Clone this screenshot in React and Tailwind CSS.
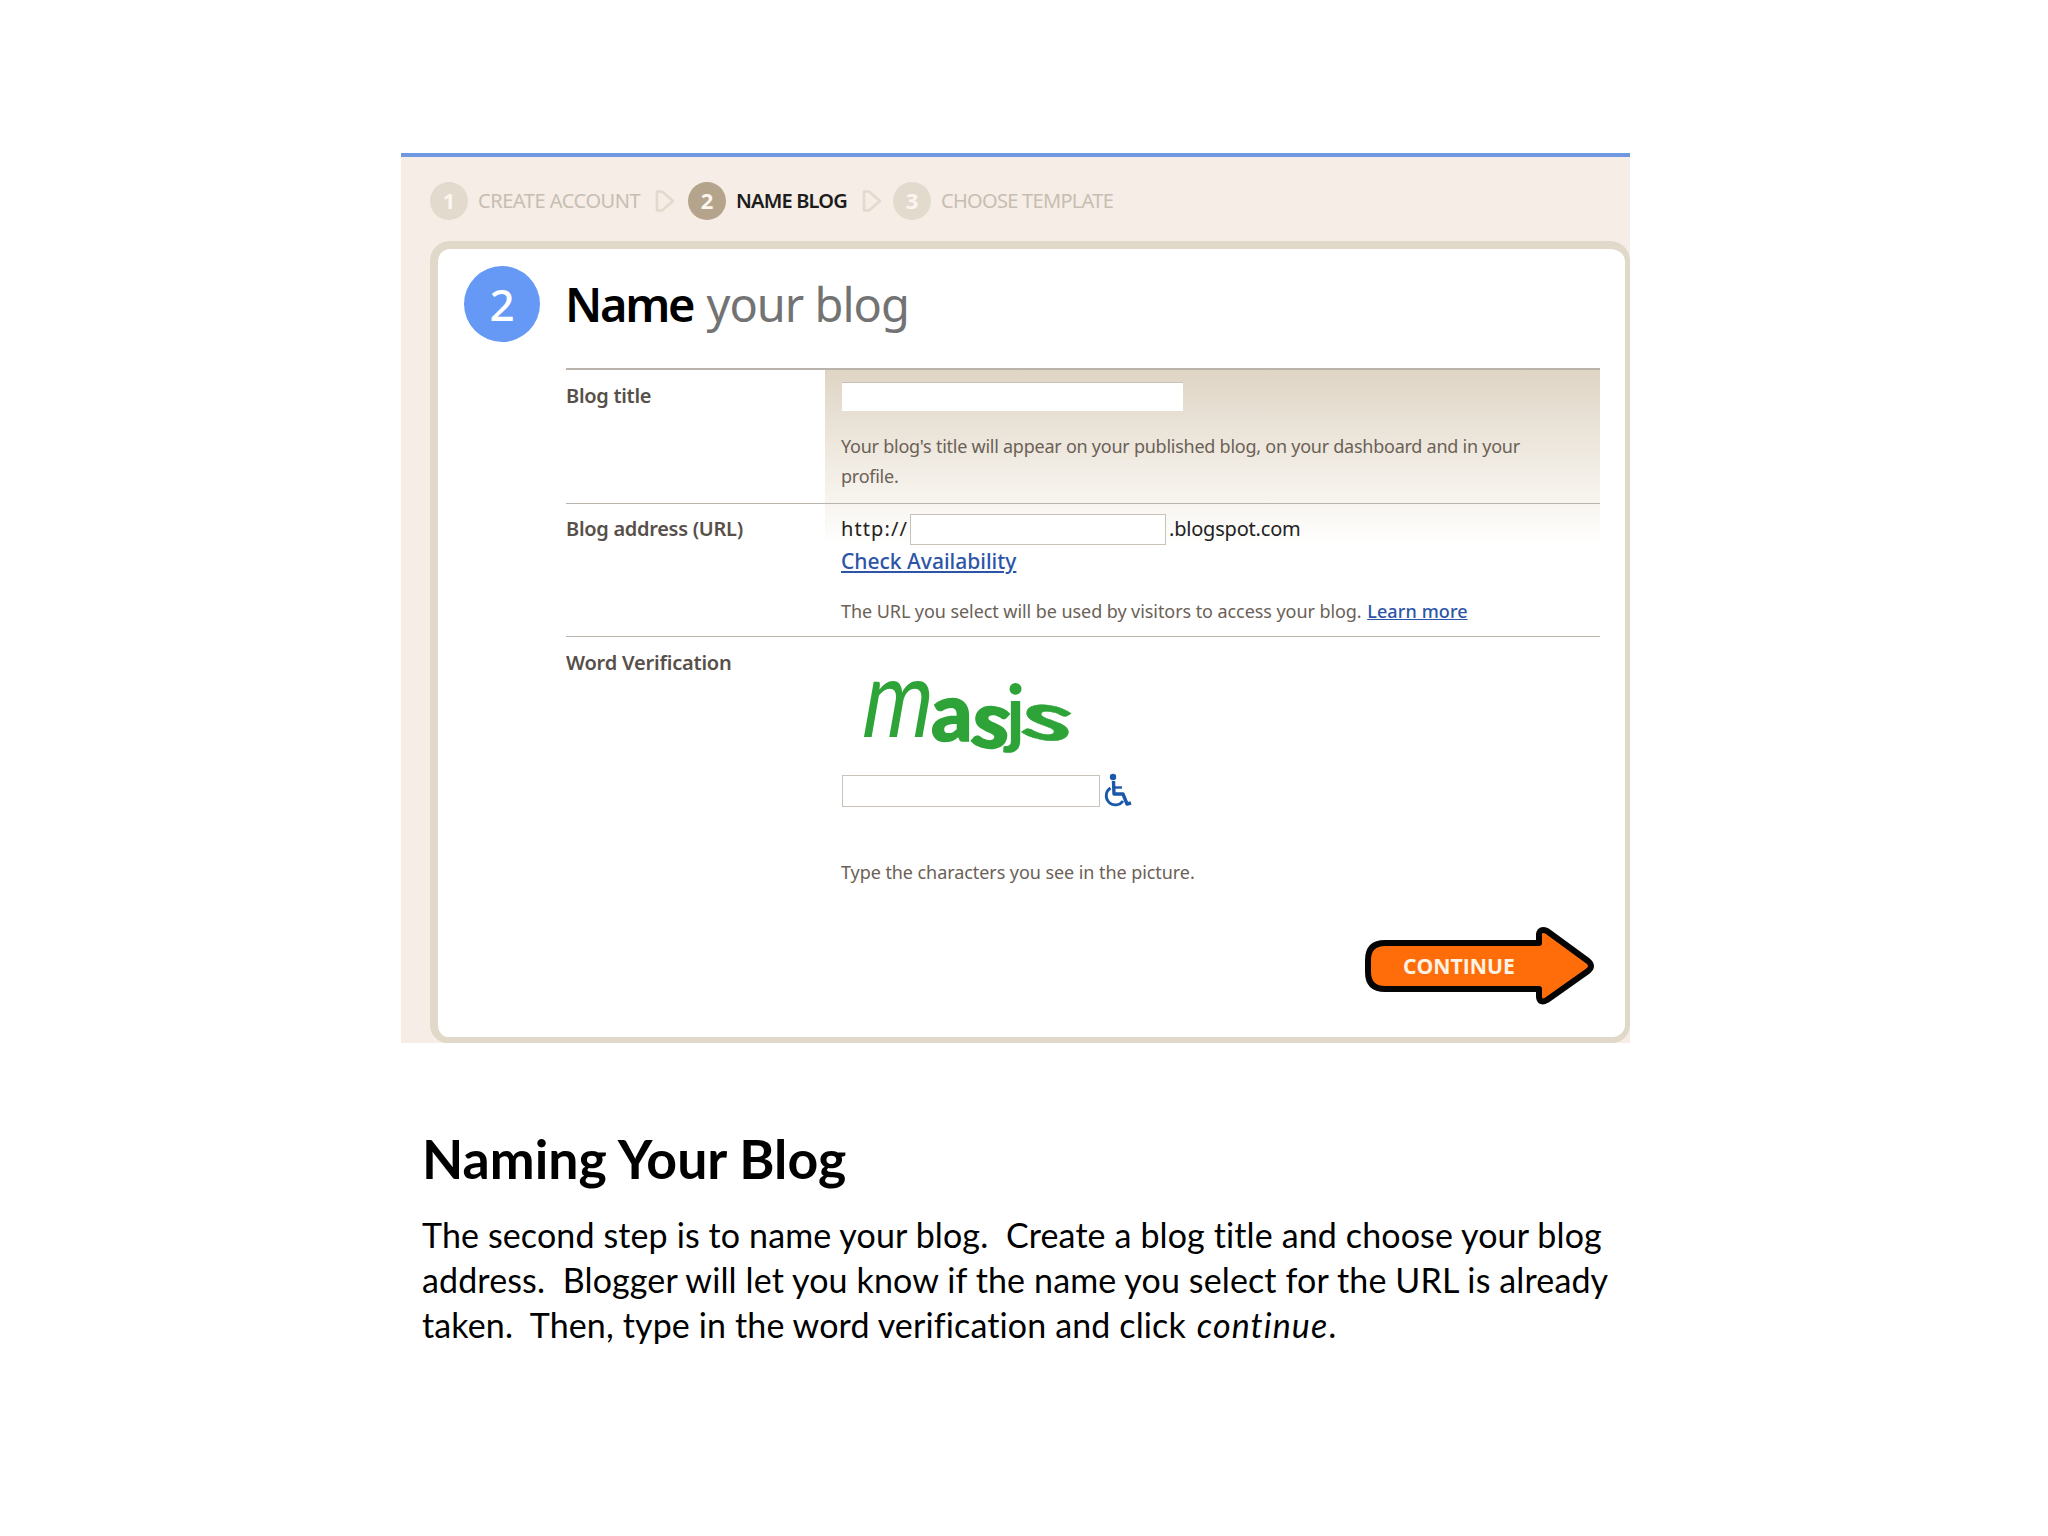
import React from "react";

const ui = { fontFamily: '"Noto Sans", sans-serif' };

function StepDot({ n, active }) {
  return (
    <div className={`flex h-[38px] w-[38px] shrink-0 items-center justify-center rounded-full pb-[2px] text-[22px] font-bold ${active ? "bg-[#b4a48c] text-[#fbf6ee]" : "bg-[#e3dace] text-[#fbf6ee]"}`}>
      {n}
    </div>
  );
}

function Tri() {
  return (
    <svg width="22" height="24" viewBox="0 0 22 24" className="shrink-0">
      <path d="M3 2.5 L3 21.5 L8 21.5 L19 12 L8 2.5 Z" fill="none" stroke="#e3dace" strokeWidth="2.5" strokeLinejoin="round" />
    </svg>
  );
}

function Captcha() {
  return (
    <svg width="240" height="90" viewBox="0 0 240 90" className="block overflow-visible">
      <g fill="#2ea338" stroke="#2ea338" style={{ fontFamily: '"Lato", sans-serif' }}>
        <text x="0" y="0" fontSize="109" strokeWidth="0" transform="translate(17 68) skewX(-10) scale(0.78 1)">m</text>
        <text x="0" y="0" fontSize="81" fontWeight="900" strokeWidth="1.5" transform="translate(90 72)">a</text>
        <text x="0" y="0" fontSize="79" fontWeight="900" strokeWidth="1.5" transform="translate(128 76) rotate(8) scale(1.1 1)">s</text>
        <text x="0" y="0" fontSize="75" fontWeight="700" strokeWidth="0" transform="translate(165 70)">j</text>
        <text x="0" y="0" fontSize="70" fontWeight="700" strokeWidth="0.5" transform="translate(177 66) rotate(10) scale(1.72 0.95)">s</text>
      </g>
    </svg>
  );
}

function Wheelchair() {
  return (
    <svg width="28" height="36" viewBox="0 0 28 36" className="block shrink-0">
      <circle cx="9" cy="4" r="3.2" fill="#1c58a8" />
      <path d="M9.5 8 L10 21 L19 21 L23 31 L27 30" fill="none" stroke="#1c58a8" strokeWidth="3.4" strokeLinejoin="round" />
      <path d="M10 14.5 L18 14.5" fill="none" stroke="#1c58a8" strokeWidth="2.4" />
      <path d="M6.5 15 A9.2 9.2 0 1 0 19 28" fill="none" stroke="#1c58a8" strokeWidth="2.8" />
    </svg>
  );
}

function ContinueArrow() {
  return (
    <div className="relative h-[80px] w-[232px]">
      <svg width="232" height="80" viewBox="0 0 232 80" className="block">
        <path d="M22 17 L176 17 L176 8 Q177 2 184 5 L225 35 Q231 40 225 45 L184 74 Q177 78 176 71 L176 63 L22 63 Q5 63 5 46 L5 34 Q5 17 22 17 Z" fill="#ff6d0a" stroke="#050505" strokeWidth="6" strokeLinejoin="round" />
      </svg>
      <span className="absolute left-[40px] top-[26px] text-[21.2px] leading-[28px] font-bold text-[#fdf3e4]" style={{ fontFamily: '"Open Sans", sans-serif' }}>CONTINUE</span>
    </div>
  );
}

function Field({ className }) {
  return <div className={`border border-[#c9c2b8] bg-white ${className}`} />;
}

export default function App() {
  return (
    <div className="h-[1536px] w-[2048px] bg-white pl-[401px] pt-[153px]">
      <div className="flex h-[890px] w-[1229px] flex-col border-t-[4px] border-[#6f98e0] bg-[#f5ede6]" style={ui}>
        <div className="flex h-[84px] items-center pl-[29px] pt-[4px] text-[20px] whitespace-nowrap text-[#c7beb2]">
          <StepDot n="1" />
          <span className="ml-[10px] w-[162px] tracking-[-0.45px]">CREATE ACCOUNT</span>
          <span className="ml-[14px]"><Tri /></span>
          <span className="ml-[12px]"><StepDot n="2" active /></span>
          <span className="ml-[10px] w-[113px] font-semibold tracking-[-0.8px] text-[#1c1c1c]">NAME BLOG</span>
          <span className="ml-[12px]"><Tri /></span>
          <span className="ml-[10px]"><StepDot n="3" /></span>
          <span className="ml-[10px] tracking-[-0.7px]">CHOOSE TEMPLATE</span>
        </div>

        <div className="ml-[29px] flex-1 rounded-tl-[20px] rounded-tr-[20px] rounded-bl-[18px] rounded-br-[18px] border-t-[8px] border-r-[5px] border-b-[6px] border-l-[8px] border-[#e0d8c8] bg-white">
          <div className="flex h-[119px] items-center pb-[10px] pl-[26px]">
            <div className="flex h-[76px] w-[76px] items-center justify-center rounded-full bg-[#6699f5] text-[44px] leading-none font-medium text-white">2</div>
            <div className="ml-[25px] mt-[2px] text-[47px] leading-none tracking-[-1px] text-[#737373]">
              <span className="font-semibold tracking-[-2.3px] text-black">Name</span> <span className="ml-[2px]">your blog</span>
            </div>
          </div>

          <div className="ml-[128px] w-[1034px] text-[18px] text-[#6b6156]">
            <div className="flex h-[135px] border-t-2 border-[#b9b3ab]">
              <div className="w-[259px] pt-[12px] text-[20px] leading-[28px] font-semibold tracking-[-0.3px] text-[#57504a]">Blog title</div>
              <div className="flex-1 bg-gradient-to-b from-[#dfd5c5] to-[#f8f5f0] pl-[16px] pr-[40px] pt-[12px]">
                <Field className="ml-[1px] h-[29px] w-[341px] border-x-0 border-b-0 border-t-[#c9c2b8]" />
                <p className="mt-[20px] text-[18px] leading-[30px] tracking-[-0.25px]">Your blog's title will appear on your published blog, on your dashboard and in your profile.</p>
              </div>
            </div>

            <div className="flex h-[133px] border-t border-[#b9b3ab]">
              <div className="w-[259px] pt-[11px] text-[20px] leading-[28px] font-semibold tracking-[-0.3px] text-[#57504a]">Blog address (URL)</div>
              <div className="flex-1 bg-[linear-gradient(#f8f5f0,#ffffff)] bg-[length:100%_42px] bg-no-repeat pl-[16px] pt-[10px]">
                <div className="flex h-[31px] items-center text-[20px] text-[#222222]">
                  <span className="mb-[2px] w-[69px] tracking-[1.1px]">http://</span>
                  <Field className="h-[31px] w-[256px] border-[#c4bdb4]" />
                  <span className="mb-[2px] ml-[3px] tracking-[-0.2px]">.blogspot.com</span>
                </div>
                <div className="mt-[1px] text-[21px] leading-[30px] font-medium text-[#2c55a8] underline">Check Availability</div>
                <p className="mt-[20px] text-[18px] leading-[30px] tracking-[-0.07px]">The URL you select will be used by visitors to access your blog. <span className="ml-[1px] font-medium tracking-[0.1px] text-[#2c55a8] underline">Learn more</span></p>
              </div>
            </div>

            <div className="flex border-t border-[#b9b3ab]">
              <div className="w-[259px] pt-[12px] text-[20px] leading-[28px] font-semibold tracking-[-0.2px] text-[#57504a]">Word Verification</div>
              <div className="flex-1 pl-[16px] pt-[32px]">
                <Captcha />
                <div className="mt-[14px] flex items-center gap-[4px]">
                  <Field className="ml-[1px] h-[32px] w-[258px] border-[#c9c2b8]" />
                  <Wheelchair />
                </div>
                <p className="mt-[48px] text-[18px] leading-[30px] tracking-[-0.07px]">Type the characters you see in the picture.</p>
                <div className="mt-[39px] flex justify-end pr-[5px]">
                  <ContinueArrow />
                </div>
              </div>
            </div>
          </div>
        </div>
      </div>

      <div className="ml-[21px] w-[1210px] text-black" style={{ fontFamily: '"Lato", sans-serif' }}>
        <h1 className="mt-[83px] text-[53.6px] leading-[64px] font-bold">Naming Your Blog</h1>
        <p className="mt-[23px] text-[34px] leading-[44.8px] tracking-[0.13px]">
          The second step is to name your blog.&nbsp; Create a blog title and choose your blog address.&nbsp; Blogger will let you know if the name you select for the URL is already taken.&nbsp; Then, type in the word verification and click <em className="ml-[2px] tracking-[1.1px]">continue</em>.
        </p>
      </div>
    </div>
  );
}
